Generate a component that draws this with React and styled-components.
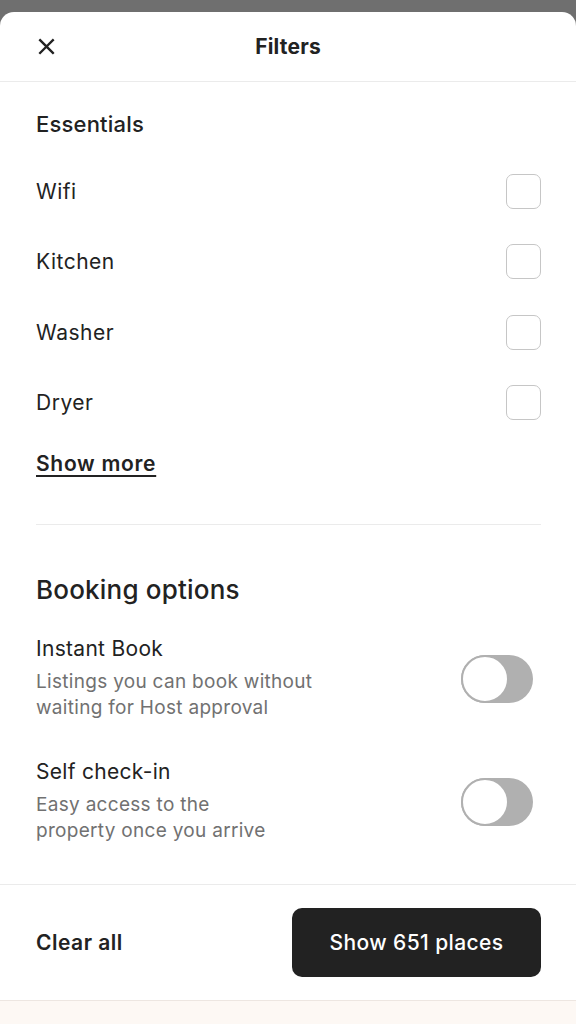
import React from "react";
import styled, { createGlobalStyle } from "styled-components";

const Global = createGlobalStyle`
  html, body { margin: 0; padding: 0; background: #6f6f6f; overflow: hidden; }
  body { font-family: Inter, "Noto Sans", sans-serif; color: #222222; -webkit-font-smoothing: antialiased; }
  * { box-sizing: border-box; }
`;

const Sheet = styled.div`
  margin-top: 12px;
  background: #ffffff;
  border-radius: 14px 14px 0 0;
  height: 1012px;
  display: flex;
  flex-direction: column;
  overflow: hidden;
`;

const Header = styled.header`
  height: 70px;
  flex-shrink: 0;
  display: grid;
  grid-template-columns: 1fr auto 1fr;
  align-items: center;
  padding: 0 36px;
  border-bottom: 1px solid #ebebeb;
`;

const CloseButton = styled.button`
  justify-self: start;
  width: 20px;
  height: 20px;
  padding: 0;
  border: none;
  background: none;
  display: flex;
  align-items: center;
  justify-content: center;
  color: #222;
`;

const Title = styled.h1`
  margin: 0;
  font-size: 21px;
  font-weight: 700;
  line-height: 26px;
  letter-spacing: 0.2px;
`;

const Content = styled.main`
  flex: 1;
  padding: 28px 35px 0 36px;
`;

const SectionTitle = styled.h2`
  margin: 0;
  font-size: ${(p) => p.$size}px;
  font-weight: 500;
  line-height: ${(p) => p.$lh}px;
  letter-spacing: 0.2px;
  margin-bottom: ${(p) => p.$after}px;
`;

const CheckRow = styled.label`
  height: 70.5px;
  display: flex;
  align-items: center;
  justify-content: space-between;
  font-size: 21px;
  font-weight: 400;
  letter-spacing: 0.5px;
`;

const Box = styled.span`
  width: 35px;
  height: 35px;
  border: 1.5px solid #c6c6c6;
  border-radius: 7px;
  background: #fff;
`;

const ShowMore = styled.button`
  margin-top: 13px;
  padding: 0;
  border: none;
  background: none;
  font-family: inherit;
  color: #222;
  font-size: 21px;
  font-weight: 600;
  line-height: 26px;
  letter-spacing: 0.7px;
  text-decoration: underline;
  text-decoration-thickness: 2px;
  text-underline-offset: 4px;
`;

const Divider = styled.hr`
  margin: 47px 0 50px;
  border: none;
  border-top: 1px solid #ebebeb;
`;

const ToggleRow = styled.div`
  display: flex;
  align-items: center;
  justify-content: space-between;
  margin-top: ${(p) => p.$top}px;
  padding-right: 8px;
`;

const ToggleText = styled.div`
  display: flex;
  flex-direction: column;
  gap: 7px;
`;

const OptionTitle = styled.div`
  font-size: 21px;
  line-height: 26px;
  letter-spacing: 0.3px;
`;

const OptionDesc = styled.div`
  font-size: 19px;
  line-height: 26px;
  letter-spacing: 0.3px;
  color: #717171;
`;

const Toggle = styled.button`
  width: 72px;
  height: 48px;
  border-radius: 24px;
  border: none;
  padding: 0;
  background: #b0b0b0;
  position: relative;
  flex-shrink: 0;
`;

const Knob = styled.span`
  position: absolute;
  left: 0;
  top: 0;
  width: 48px;
  height: 48px;
  border-radius: 50%;
  background: #fff;
  border: 2px solid #b0b0b0;
`;

const Footer = styled.footer`
  flex-shrink: 0;
  height: 116px;
  border-top: 1px solid #ebebeb;
  display: flex;
  align-items: center;
  justify-content: space-between;
  padding: 0 35px 0 36px;
`;

const ClearAll = styled.button`
  border: none;
  background: none;
  padding: 0;
  font-family: inherit;
  font-size: 21px;
  font-weight: 600;
  letter-spacing: 0.5px;
  color: #222;
`;

const Primary = styled.button`
  width: 249px;
  height: 69px;
  border: none;
  border-radius: 10px;
  background: #222222;
  color: #ffffff;
  font-family: inherit;
  font-size: 21px;
  font-weight: 500;
  letter-spacing: 0.4px;
`;

const BottomBar = styled.div`
  flex-shrink: 0;
  height: 24px;
  background: #fdf8f4;
  border-top: 1px solid #ede6e1;
`;

const essentials = ["Wifi", "Kitchen", "Washer", "Dryer"];
const options = [
  { title: "Instant Book", lines: ["Listings you can book without", "waiting for Host approval"], top: 31 },
  { title: "Self check-in", lines: ["Easy access to the", "property once you arrive"], top: 38 },
];

export default function App() {
  return (
    <>
      <Global />
      <Sheet>
        <Header>
          <CloseButton aria-label="Close">
            <svg width="17" height="17" viewBox="0 0 16 16" fill="none" stroke="#222" strokeWidth="2.2" strokeLinecap="square">
              <path d="M2 2 L14 14 M14 2 L2 14" />
            </svg>
          </CloseButton>
          <Title>Filters</Title>
          <span />
        </Header>
        <Content>
          <SectionTitle $size={22} $lh={28} $after={18}>Essentials</SectionTitle>
          {essentials.map((e) => (
            <CheckRow key={e}>
              {e}
              <Box />
            </CheckRow>
          ))}
          <ShowMore>Show more</ShowMore>
          <Divider />
          <SectionTitle $size={26} $lh={30} $after={0}>Booking options</SectionTitle>
          {options.map((o) => (
            <ToggleRow key={o.title} $top={o.top}>
              <ToggleText>
                <OptionTitle>{o.title}</OptionTitle>
                <OptionDesc>
                  {o.lines[0]}
                  <br />
                  {o.lines[1]}
                </OptionDesc>
              </ToggleText>
              <Toggle aria-label={o.title}>
                <Knob />
              </Toggle>
            </ToggleRow>
          ))}
        </Content>
        <Footer>
          <ClearAll>Clear all</ClearAll>
          <Primary>Show 651 places</Primary>
        </Footer>
        <BottomBar />
      </Sheet>
    </>
  );
}
